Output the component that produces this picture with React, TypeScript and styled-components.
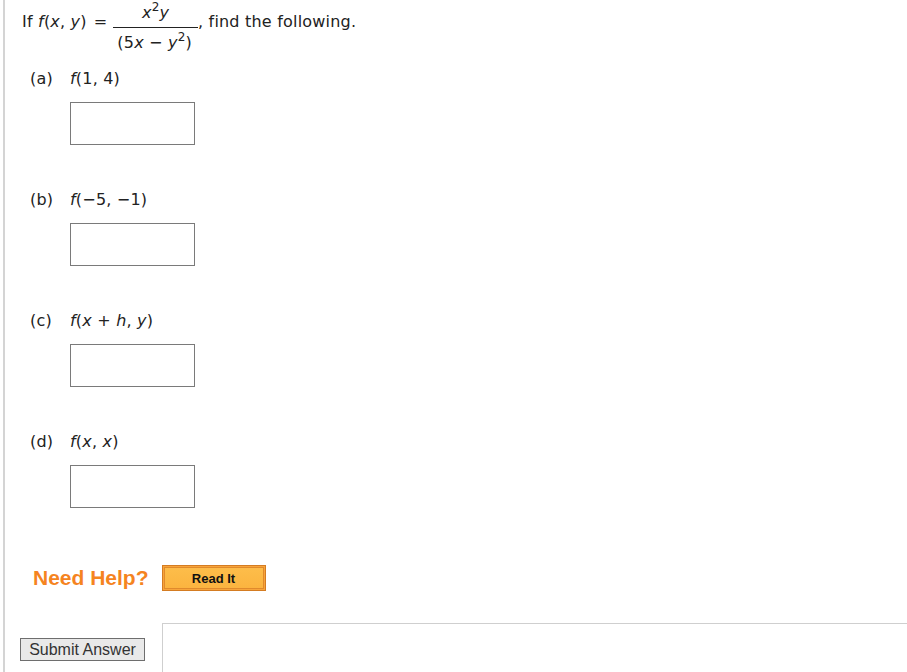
import React from "react";
import styled, { createGlobalStyle } from "styled-components";

const Global = createGlobalStyle`
  html, body { margin: 0; padding: 0; background: #fff; }
  body { font-family: Verdana, "DejaVu Sans", sans-serif; color: #222; }
`;

const Page = styled.div`
  margin-left: 3px;
  border-left: 2px solid #d4d4d4;
  min-height: 672px;
  box-sizing: border-box;
  padding: 1px 0 0 17px;
  font-size: 16px;
  letter-spacing: 0.2px;
  overflow: hidden;
`;

const Header = styled.div`
  display: flex;
  align-items: flex-start;
  line-height: 20px;
`;

const Text = styled.span`
  margin-top: 11px;
`;

const Eq = styled.span`
  margin-left: 7px;
`;

const Fn = styled.i`
  font-style: italic;
`;

const Frac = styled.span`
  display: inline-flex;
  flex-direction: column;
  align-items: center;
  margin: 0 0 0 6px;
`;

const Num = styled.span`
  line-height: 24px;
  padding: 0 2px 2px;
`;

const Den = styled.span`
  line-height: 24px;
  padding: 3px 6px 0 4px;
  border-top: 1px solid #222;
  align-self: stretch;
  text-align: center;
`;

const Sup = styled.sup`
  font-size: 12px;
  vertical-align: 7px;
  line-height: 0;
`;

const Part = styled.div`
  margin-top: 14px;
  & + & { margin-top: 45px; }
`;

const Label = styled.div`
  display: flex;
  line-height: 20px;
  padding-left: 8px;
`;

const Letter = styled.span`
  width: 40px;
`;

const Answer = styled.div`
  margin: 13px 0 0 48px;
  width: 125px;
  height: 43px;
  box-sizing: border-box;
  border: 1px solid #7a7a7a;
  background: #fff;
`;

const HelpRow = styled.div`
  display: flex;
  align-items: center;
  gap: 13px;
  margin: 57px 0 0 11px;
  letter-spacing: normal;
`;

const HelpText = styled.span`
  font-family: Arial, "Liberation Sans", sans-serif;
  font-weight: bold;
  font-size: 21px;
  color: #f5841f;
`;

const ReadIt = styled.button`
  width: 104px;
  height: 26px;
  box-sizing: border-box;
  padding: 0;
  border: 1px solid #d47c22;
  background: #f8a43a;
  display: flex;
  align-items: stretch;
  justify-content: stretch;
  cursor: pointer;
`;

const ReadItInner = styled.span`
  flex: 1;
  margin: 1px;
  border: 1px solid #e08a2c;
  background: linear-gradient(#fdbd4a, #fbb440);
  font-family: Arial, "Liberation Sans", sans-serif;
  font-weight: bold;
  font-size: 13px;
  color: #111;
  display: flex;
  align-items: center;
  justify-content: center;
`;

const Bottom = styled.div`
  display: flex;
  align-items: flex-start;
  margin-top: 32px;
  margin-left: -2px;
  letter-spacing: normal;
`;

const Submit = styled.button`
  margin-top: 15px;
  width: 125px;
  height: 23px;
  box-sizing: border-box;
  padding: 0;
  border: 1px solid #6e6e6e;
  background: #e9e9e9;
  font-family: Arial, "Liberation Sans", sans-serif;
  font-size: 16px;
  color: #333;
`;

const Results = styled.div`
  flex: 1;
  margin-left: 17px;
  height: 60px;
  border-top: 1px solid #cfcfcf;
  border-left: 1px solid #cfcfcf;
`;

const parts: { letter: string; expr: React.ReactNode }[] = [
  { letter: "(a)", expr: <><Fn>f</Fn>(1, 4)</> },
  { letter: "(b)", expr: <><Fn>f</Fn>(−5, −1)</> },
  { letter: "(c)", expr: <><Fn>f</Fn>(<Fn>x</Fn> + <Fn>h</Fn>, <Fn>y</Fn>)</> },
  { letter: "(d)", expr: <><Fn>f</Fn>(<Fn>x</Fn>, <Fn>x</Fn>)</> },
];

export default function App() {
  return (
    <>
      <Global />
      <Page>
        <Header>
          <Text>
            If <Fn>f</Fn>(<Fn>x</Fn>, <Fn>y</Fn>)<Eq>=</Eq>
          </Text>
          <Frac>
            <Num>
              <Fn>x</Fn>
              <Sup>2</Sup>
              <Fn>y</Fn>
            </Num>
            <Den>
              (5<Fn>x</Fn> − <Fn>y</Fn>
              <Sup>2</Sup>)
            </Den>
          </Frac>
          <Text>, find the following.</Text>
        </Header>
        {parts.map((p) => (
          <Part key={p.letter}>
            <Label>
              <Letter>{p.letter}</Letter>
              <span>{p.expr}</span>
            </Label>
            <Answer />
          </Part>
        ))}
        <HelpRow>
          <HelpText>Need Help?</HelpText>
          <ReadIt>
            <ReadItInner>Read It</ReadItInner>
          </ReadIt>
        </HelpRow>
        <Bottom>
          <Submit>Submit Answer</Submit>
          <Results />
        </Bottom>
      </Page>
    </>
  );
}
